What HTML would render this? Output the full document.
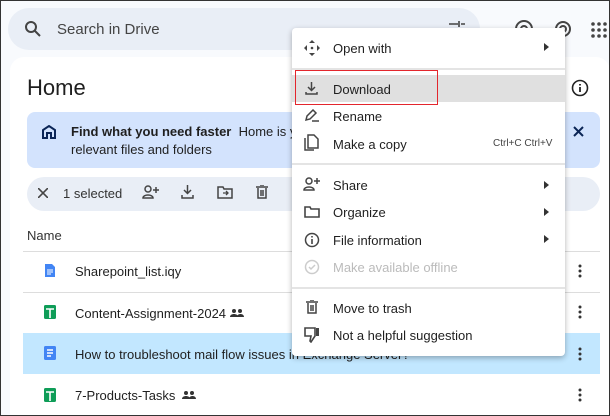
<!DOCTYPE html>
<html><head><style>
*{box-sizing:border-box;margin:0;padding:0}
html,body{width:610px;height:416px;overflow:hidden}
body{background:#f8fafd;font-family:"Liberation Sans",sans-serif;color:#1f1f1f;position:relative}
.a{position:absolute}
.t{font-size:13px;white-space:nowrap}
svg{position:absolute}
</style></head><body>
<div class="a" style="left:8px;top:8px;width:472px;height:42px;border-radius:21px;background:#e9eef6"></div>
<svg style="left:24px;top:20px" width="18" height="18" viewBox="0 0 18 18"><circle cx="7" cy="7" r="5" fill="none" stroke="#444" stroke-width="2"/><path d="M11 11l5 5" stroke="#444" stroke-width="2"/></svg>
<div class="a" style="left:57px;top:21px;font-size:15px;color:#444">Search in Drive</div>
<svg style="left:449px;top:21px" width="16" height="14"><path d="M0 3h9M12 3h4M10 0v6M0 11h4M7 11h9M6 8v6" stroke="#444" stroke-width="1.6"/></svg>
<svg style="left:514px;top:19px" width="20" height="20"><circle cx="10" cy="10" r="8" fill="none" stroke="#444" stroke-width="2"/><circle cx="10" cy="10" r="3" fill="none" stroke="#444" stroke-width="2"/></svg>
<svg style="left:553px;top:19px" width="20" height="20"><circle cx="10" cy="10" r="7" fill="none" stroke="#444" stroke-width="2"/><circle cx="10" cy="10" r="3" fill="none" stroke="#444" stroke-width="2"/></svg>
<svg style="left:591px;top:22px" width="16" height="16"><g fill="#444"><circle cx="2" cy="2" r="1.8"/><circle cx="8" cy="2" r="1.8"/><circle cx="14" cy="2" r="1.8"/><circle cx="2" cy="8" r="1.8"/><circle cx="8" cy="8" r="1.8"/><circle cx="14" cy="8" r="1.8"/><circle cx="2" cy="14" r="1.8"/><circle cx="8" cy="14" r="1.8"/><circle cx="14" cy="14" r="1.8"/></g></svg>
<div class="a" style="left:10px;top:57px;width:600px;height:370px;background:#fff;border-radius:14px"></div>
<div class="a" style="left:27px;top:75px;font-size:22px">Home</div>
<svg style="left:571px;top:79px" width="18" height="18"><circle cx="9" cy="9" r="7.5" fill="none" stroke="#222" stroke-width="1.6"/><path d="M9 8v5M9 5v1.5" stroke="#222" stroke-width="1.8"/></svg>
<div class="a" style="left:27px;top:112px;width:573px;height:56px;background:#d3e3fd;border-radius:8px"></div>
<svg style="left:42px;top:125px" width="14" height="14"><path d="M1 13V5l6-4 6 4v8H9V8H5v5z" fill="none" stroke="#0b2556" stroke-width="2"/></svg>
<div class="a t" style="left:71px;top:124px;font-weight:bold;color:#1f1f1f">Find what you need faster <span style="font-weight:normal">&nbsp;Home is you</span></div>
<div class="a t" style="left:71px;top:142px;color:#1f1f1f">relevant files and folders</div>
<svg style="left:573px;top:126px" width="11" height="11"><path d="M1 1l9 9M10 1l-9 9" stroke="#0b2556" stroke-width="2"/></svg>
<div class="a" style="left:27px;top:177px;width:573px;height:34px;background:#e9eef6;border-radius:17px"></div>
<svg style="left:38px;top:188px" width="10" height="10"><path d="M0 0l10 10M10 0L0 10" stroke="#444" stroke-width="1.6"/></svg>
<div class="a t" style="left:63px;top:186px;color:#333">1 selected</div>
<svg style="left:142px;top:185px" width="18" height="14"><circle cx="6" cy="4" r="3" fill="none" stroke="#444" stroke-width="1.5"/><path d="M1 13c0-4 10-4 10 0zM14 2v6M11 5h6" fill="none" stroke="#444" stroke-width="1.5"/></svg>
<svg style="left:181px;top:185px" width="13" height="14"><path d="M6.5 0v8M3 5l3.5 3.5L10 5M1 10v3h11v-3" fill="none" stroke="#444" stroke-width="1.5"/></svg>
<svg style="left:217px;top:186px" width="16" height="13"><path d="M1 1h5l1 2h8v9H1z" fill="none" stroke="#444" stroke-width="1.5"/><path d="M6 7h5M9 5l2 2-2 2" fill="none" stroke="#444" stroke-width="1.3"/></svg>
<svg style="left:256px;top:185px" width="12" height="14"><path d="M0 2h12M4 0h4M2 3v10h8V3M5 5v6M7 5v6" fill="none" stroke="#444" stroke-width="1.5"/></svg>
<div class="a t" style="left:27px;top:228px;color:#333">Name</div>
<div class="a" style="left:23px;top:251px;width:577px;height:1px;background:#ddd"></div>
<div class="a" style="left:23px;top:292px;width:577px;height:1px;background:#ddd"></div>
<div class="a" style="left:23px;top:333px;width:577px;height:41px;background:#c2e7ff"></div>
<svg style="left:45px;top:264px" width="10" height="13"><path d="M0 0h7l3 3v10H0z" fill="#4285f4"/><path d="M2 6h6M2 8h6M2 10h4" stroke="#fff"/></svg>
<div class="a t" style="left:75px;top:264px">Sharepoint_list.iqy</div>
<svg style="left:44px;top:305px" width="12" height="14"><rect width="12" height="14" rx="1.5" fill="#0f9d58"/><path d="M2 4h8M6 4v9" stroke="#fff" stroke-width="1.6"/></svg>
<div class="a t" style="left:75px;top:306px">Content-Assignment-2024</div>
<svg style="left:230px;top:309px" width="14" height="8"><circle cx="4" cy="2" r="2" fill="#333"/><circle cx="10" cy="2" r="2" fill="#333"/><path d="M0 8c0-4 8-4 8 0zM7 8c0-4 7-4 7 0z" fill="#333"/></svg>
<svg style="left:44px;top:346px" width="12" height="14"><rect width="12" height="14" rx="1.5" fill="#4285f4"/><path d="M3 4h6M3 7h6M3 10h4" stroke="#fff" stroke-width="1.4"/></svg>
<div class="a t" style="left:75px;top:347px">How to troubleshoot mail flow issues in Exchange Server?</div>
<svg style="left:44px;top:388px" width="12" height="14"><rect width="12" height="14" rx="1.5" fill="#0f9d58"/><path d="M2 4h8M6 4v9" stroke="#fff" stroke-width="1.6"/></svg>
<div class="a t" style="left:75px;top:388px">7-Products-Tasks</div>
<svg style="left:182px;top:391px" width="14" height="8"><circle cx="4" cy="2" r="2" fill="#333"/><circle cx="10" cy="2" r="2" fill="#333"/><path d="M0 8c0-4 8-4 8 0zM7 8c0-4 7-4 7 0z" fill="#333"/></svg>
<svg style="left:578px;top:264px" width="4" height="140"><g fill="#333"><circle cx="2" cy="2" r="1.5"/><circle cx="2" cy="7" r="1.5"/><circle cx="2" cy="12" r="1.5"/><circle cx="2" cy="43" r="1.5"/><circle cx="2" cy="48" r="1.5"/><circle cx="2" cy="53" r="1.5"/><circle cx="2" cy="85" r="1.5"/><circle cx="2" cy="90" r="1.5"/><circle cx="2" cy="95" r="1.5"/><circle cx="2" cy="126" r="1.5"/><circle cx="2" cy="131" r="1.5"/><circle cx="2" cy="136" r="1.5"/></g></svg>

<div class="a" style="left:292px;top:28px;width:273px;height:328px;background:#fff;border-radius:4px;box-shadow:0 2px 6px rgba(0,0,0,.3)"></div>
<div class="a" style="left:292px;top:68px;width:273px;height:2px;background:#e4e4e4"></div>
<div class="a" style="left:292px;top:75px;width:273px;height:27px;background:#e0e0e0"></div>
<div class="a" style="left:295px;top:70px;width:143px;height:35px;border:1.5px solid #e3262d"></div>
<div class="a" style="left:292px;top:163px;width:273px;height:2px;background:#e4e4e4"></div>
<div class="a" style="left:292px;top:287px;width:273px;height:2px;background:#e4e4e4"></div>
<div class="a t" style="left:333px;top:41px">Open with</div>
<div class="a t" style="left:333px;top:82px">Download</div>
<div class="a t" style="left:333px;top:109px">Rename</div>
<div class="a t" style="left:333px;top:137px">Make a copy</div>
<div class="a" style="left:493px;top:138px;font-size:10px;color:#444">Ctrl+C Ctrl+V</div>
<div class="a t" style="left:333px;top:178px">Share</div>
<div class="a t" style="left:333px;top:205px">Organize</div>
<div class="a t" style="left:333px;top:233px">File information</div>
<div class="a t" style="left:333px;top:260px;color:#bbb">Make available offline</div>
<div class="a t" style="left:333px;top:301px">Move to trash</div>
<div class="a t" style="left:333px;top:328px">Not a helpful suggestion</div>
<svg style="left:544px;top:43px" width="6" height="200"><g fill="#333"><path d="M0 0l5 4-5 4z"/><path d="M0 138l5 4-5 4z"/><path d="M0 165l5 4-5 4z"/><path d="M0 192l5 4-5 4z"/></g></svg>
<svg style="left:304px;top:40px" width="16" height="16"><path d="M8 0l3 3H5zM8 16l3-3H5zM0 8l3-3v6zM16 8l-3-3v6z" fill="#444"/><circle cx="8" cy="8" r="1.3" fill="#444"/></svg>
<svg style="left:305px;top:82px" width="13" height="13"><path d="M6.5 0v8M3 5l3.5 3.5L10 5M1 10v2h11v-2" fill="none" stroke="#444" stroke-width="1.5"/></svg>
<svg style="left:305px;top:109px" width="15" height="13"><path d="M1 11l1-4 6-6 3 3-6 6zM7 12h7" fill="none" stroke="#444" stroke-width="1.5"/></svg>
<svg style="left:304px;top:134px" width="15" height="17"><path d="M4 1h6l4 4v9H4zM1 4v12h9" fill="none" stroke="#444" stroke-width="1.5"/></svg>
<svg style="left:303px;top:177px" width="18" height="14"><circle cx="6" cy="4" r="3" fill="none" stroke="#444" stroke-width="1.5"/><path d="M1 13c0-4 10-4 10 0zM14 1v6M11 4h6" fill="none" stroke="#444" stroke-width="1.5"/></svg>
<svg style="left:304px;top:206px" width="16" height="12"><path d="M1 1h5l1 2h8v8H1z" fill="none" stroke="#444" stroke-width="1.6"/></svg>
<svg style="left:304px;top:232px" width="16" height="16"><circle cx="8" cy="8" r="6.5" fill="none" stroke="#444" stroke-width="1.5"/><path d="M8 7v5M8 4v1.5" stroke="#444" stroke-width="1.6"/></svg>
<svg style="left:304px;top:259px" width="16" height="16"><circle cx="8" cy="8" r="6.5" fill="none" stroke="#ccc" stroke-width="1.5"/><path d="M5 8l2 2 4-4" fill="none" stroke="#ccc" stroke-width="1.5"/></svg>
<svg style="left:306px;top:300px" width="12" height="14"><path d="M0 2h12M4 0h4M2 3v10h8V3M5 5v6M7 5v6" fill="none" stroke="#444" stroke-width="1.5"/></svg>
<svg style="left:304px;top:327px" width="16" height="16"><path d="M1 1h10v8l-4 6-1-1 1-5H1z" fill="none" stroke="#444" stroke-width="1.6"/><path d="M12 1h3v8h-3" fill="#444"/></svg>
<div class="a" style="left:0;top:0;width:610px;height:416px;border:1px solid #333"></div>
</body></html>
